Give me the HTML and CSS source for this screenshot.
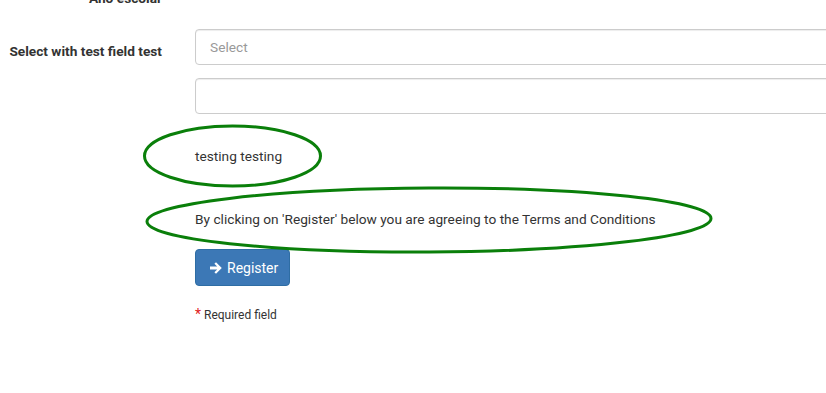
FILE: index.html
```html
<!DOCTYPE html>
<html>
<head>
<meta charset="utf-8">
<link rel="stylesheet" href="styles.css">
</head>
<body>
<div class="page">
  <form class="form">
    <div class="row row-top">
      <label class="label">Ano escolar</label>
      <div class="field"></div>
    </div>
    <div class="row row-select">
      <label class="label">Select with test field test</label>
      <div class="field fields">
        <div class="input placeholder">Select</div>
        <div class="input"></div>
      </div>
    </div>
    <div class="row">
      <div class="label"></div>
      <div class="field">
        <p class="testing">testing testing</p>
        <p class="terms">By clicking on 'Register' below you are agreeing to the Terms and Conditions</p>
        <button type="button" class="btn">
          <svg class="arrow" viewBox="0 0 14 14" width="14" height="14"><path d="M1 5.6h7.2L5.4 2.8 7 1.2l5.8 5.8L7 12.8l-1.6-1.6 2.8-2.8H1z" fill="#fff"/></svg>
          <span>Register</span>
        </button>
        <p class="required"><span class="star">*</span> Required field</p>
      </div>
    </div>
  </form>
  <svg class="marks" width="826" height="393" viewBox="0 0 826 393">
    <ellipse cx="232.5" cy="156" rx="88" ry="30" fill="none" stroke="#0a7f0a" stroke-width="3"/>
    <ellipse cx="429" cy="220" rx="282" ry="32" fill="none" stroke="#0a7f0a" stroke-width="3" transform="rotate(-0.3 429 220)"/>
  </svg>
</div>
</body>
</html>
```
FILE: styles.css
```css
html, body {
  margin: 0;
  padding: 0;
  background: #fff;
  overflow: hidden;
}
body {
  font-family: Roboto, "Liberation Sans", sans-serif;
  font-size: 13.7px;
  line-height: 20px;
  color: #333;
}
.page {
  position: relative;
  width: 826px;
  height: 393px;
  overflow: hidden;
}
.form {
  width: 900px;
  margin-top: -12px;
}
.row {
  display: grid;
  grid-template-columns: 154px 1fr;
  column-gap: 33px;
  padding-left: 8px;
}
.label {
  font-weight: bold;
  text-align: right;
  white-space: nowrap;
  direction: rtl;
}
.row-top {
  height: 41px;
}
.row-select .label {
  padding-top: 12px;
}
.fields {
  display: flex;
  flex-direction: column;
  gap: 13px;
}
.input {
  height: 34px;
  border: 1px solid #ccc;
  border-radius: 4px;
  box-shadow: inset 0 1px 1px rgba(0,0,0,0.075);
  padding: 0 14px;
  line-height: 34px;
}
.placeholder {
  color: #999;
}
.testing {
  margin: 32px 0 0;
}
.terms {
  margin: 43px 0 0;
}
.btn {
  margin-top: 20px;
  display: inline-flex;
  align-items: center;
  gap: 4px;
  height: 37px;
  width: 95px;
  padding: 0 0 0 13px;
  border: 1px solid #2e6da4;
  border-radius: 4px;
  background: #3c78b6;
  color: #fff;
  font-family: Roboto, "Liberation Sans", sans-serif;
  font-size: 14px;
}
.arrow {
  display: block;
}
.required {
  margin: 20px 0 0;
  font-size: 12px;
  line-height: 17px;
}
.star {
  color: #e02020;
  font-size: 14px;
}
.marks {
  position: absolute;
  left: 0;
  top: 0;
  pointer-events: none;
}
```
